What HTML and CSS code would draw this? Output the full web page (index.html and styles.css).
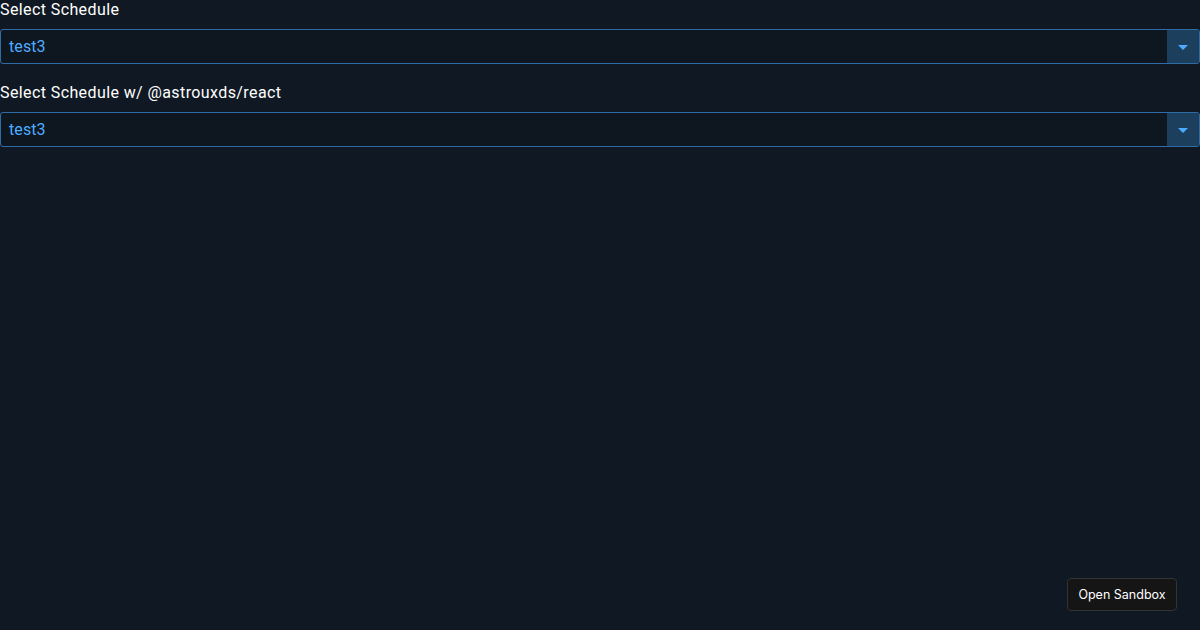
FILE: index.html
```html
<!DOCTYPE html>
<html>
<head>
<meta charset="utf-8">
<link rel="stylesheet" href="styles.css">
</head>
<body>
<div class="page">
  <div class="field">
    <label class="label">Select Schedule</label>
    <div class="select">
      <span class="value">test3</span>
      <span class="arrow"><span class="tri"></span></span>
    </div>
  </div>
  <div class="field">
    <label class="label">Select Schedule w/ @astrouxds/react</label>
    <div class="select">
      <span class="value">test3</span>
      <span class="arrow"><span class="tri"></span></span>
    </div>
  </div>
</div>
<button class="sandbox">Open Sandbox</button>
</body>
</html>
```
FILE: styles.css
```css
html, body {
  margin: 0;
  padding: 0;
  background: #101923;
  height: 100%;
}
body {
  font-family: Roboto, "Noto Sans", sans-serif;
  color: #ffffff;
}
.page {
  display: flex;
  flex-direction: column;
  gap: 19px;
  width: 1200px;
}
.field {
  display: flex;
  flex-direction: column;
}
.label {
  font-size: 16px;
  line-height: 20px;
  letter-spacing: 0.4px;
  margin-bottom: 9px;
  color: #ffffff;
}
.select {
  box-sizing: border-box;
  height: 35px;
  width: 1200px;
  border: 1px solid #2f6ca6;
  border-radius: 3px;
  background: #0e1620;
  display: flex;
  align-items: center;
  overflow: hidden;
}
.value {
  flex: 1;
  padding-left: 8px;
  font-size: 16px;
  color: #4dacff;
  letter-spacing: 0.1px;
}
.arrow {
  width: 32px;
  height: 100%;
  background: #1c3f5e;
  display: flex;
  align-items: center;
  justify-content: center;
}
.tri {
  width: 0;
  height: 0;
  border-left: 5px solid transparent;
  border-right: 5px solid transparent;
  border-top: 5px solid #4dacff;
  margin-top: 1px;
}
.sandbox {
  position: fixed;
  right: 23px;
  bottom: 19px;
  width: 110px;
  height: 33px;
  box-sizing: border-box;
  background: #151515;
  border: 1px solid #333333;
  border-radius: 4px;
  color: #ffffff;
  font-family: Inter, "Noto Sans", sans-serif;
  font-size: 12.5px;
  padding: 0;
}
```
